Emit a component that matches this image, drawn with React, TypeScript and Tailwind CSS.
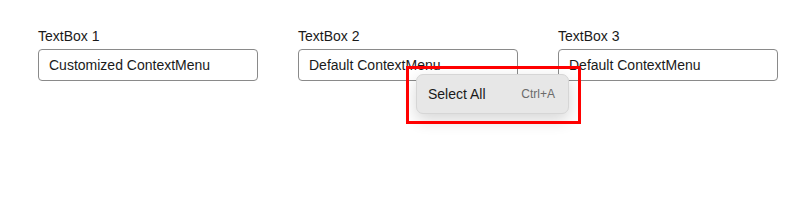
import React from "react";

function Field({ label, value }: { label: string; value: string }) {
  return (
    <div className="flex w-[220px] flex-col">
      <div className="h-[23px] text-[14px] leading-[20px] text-[#1a1a1a]">{label}</div>
      <div className="flex h-[32px] items-center rounded-[4px] border border-[#8a8a8a] bg-white px-[10px] text-[14px] text-[#1a1a1a]">
        {value}
      </div>
    </div>
  );
}

export default function App() {
  return (
    <div
      className="relative h-[216px] w-[808px] bg-white"
      style={{ fontFamily: '"Segoe UI", "Liberation Sans", Arial, sans-serif' }}
    >
      <div className="flex gap-[40px] pl-[38px] pt-[26px]">
        <Field label="TextBox 1" value="Customized ContextMenu" />
        <Field label="TextBox 2" value="Default ContextMenu" />
        <Field label="TextBox 3" value="Default ContextMenu" />
      </div>
      <div className="absolute left-[416px] top-[74px] flex h-[40px] w-[153px] items-center justify-between rounded-[7px] border border-[#d6d6d6] bg-[#e7e7e7] pl-[11px] pr-[13px] shadow-[0_6px_16px_rgba(0,0,0,0.16)]">
        <span className="text-[14px] text-[#1a1a1a]">Select All</span>
        <span className="text-[12px] text-[#6b6b6b]">Ctrl+A</span>
      </div>
      <div className="pointer-events-none absolute left-[406px] top-[66px] h-[58px] w-[175px] border-[3px] border-[#ff0000]" />
    </div>
  );
}
